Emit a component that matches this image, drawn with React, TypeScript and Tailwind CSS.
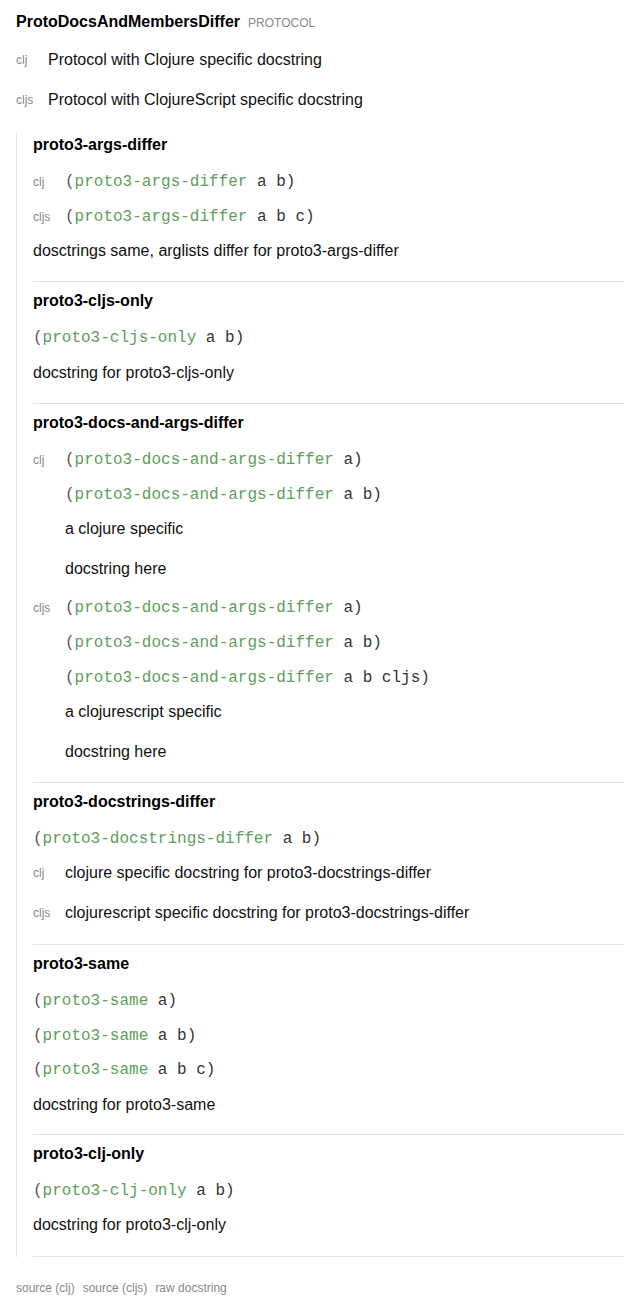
import React from 'react';

const sans = "font-['Liberation_Sans',Arial,sans-serif]";
const mono = "font-['Liberation_Mono','Courier_New',monospace]";

type Code = { name: string; args: string };

const CodeLine = ({ name, args, className = '' }: Code & { className?: string }) => (
  <div className={`${mono} text-[16px] leading-6 whitespace-pre ${className}`}>
    <span className="text-[#555]">(</span>
    <span className="text-[#5d9e5a]">{name}</span>
    <span className="text-[#333]">{args ? ' ' + args : ''})</span>
  </div>
);

// small platform tag (clj / cljs) in a 32px column
const Label = ({ children }: { children: React.ReactNode }) => (
  <span className="w-8 shrink-0 pt-px text-[12px] leading-[23px] text-[#888]">{children}</span>
);

const Doc = ({ children, className = '' }: { children: React.ReactNode; className?: string }) => (
  <p className={`text-[16px] leading-6 text-[#111] ${className}`}>{children}</p>
);

const Member = ({
  title,
  first = false,
  pb = 'pb-[18px]',
  children,
}: {
  title: string;
  first?: boolean;
  pb?: string;
  children: React.ReactNode;
}) => (
  <section className={`border-b border-[#e4e4e4] ${pb}`}>
    <h4 className={`text-[16px] leading-6 font-bold text-black ${first ? 'mt-[2px]' : 'mt-[7px]'}`}>{title}</h4>
    {children}
  </section>
);

export default function App() {
  return (
    <div className={`${sans} bg-white pl-4 pt-[10px] pb-8 min-h-[1311px]`}>
      <div className="flex items-baseline gap-2 leading-6">
        <h2 className="text-[16px] font-bold text-black">ProtoDocsAndMembersDiffer</h2>
        <span className="text-[12px] uppercase text-[#888]">protocol</span>
      </div>
      <div className="mt-[13px] flex items-start">
        <Label>clj</Label>
        <Doc>Protocol with Clojure specific docstring</Doc>
      </div>
      <div className="mt-4 flex items-start">
        <Label>cljs</Label>
        <Doc>Protocol with ClojureScript specific docstring</Doc>
      </div>

      <div className="mt-[21px] border-l border-[#e4e4e4] pl-4">
        <Member title="proto3-args-differ" first>
          <div className="mt-[13px] flex items-start">
            <Label>clj</Label>
            <CodeLine name="proto3-args-differ" args="a b" />
          </div>
          <div className="mt-[11px] flex items-start">
            <Label>cljs</Label>
            <CodeLine name="proto3-args-differ" args="a b c" />
          </div>
          <Doc className="mt-[10px]">dosctrings same, arglists differ for proto3-args-differ</Doc>
        </Member>

        <Member title="proto3-cljs-only">
          <CodeLine className="mt-[13px]" name="proto3-cljs-only" args="a b" />
          <Doc className="mt-[11px]">docstring for proto3-cljs-only</Doc>
        </Member>

        <Member title="proto3-docs-and-args-differ">
          <div className="mt-[13px] flex items-start">
            <Label>clj</Label>
            <div>
              <CodeLine name="proto3-docs-and-args-differ" args="a" />
              <CodeLine className="mt-[11px]" name="proto3-docs-and-args-differ" args="a b" />
              <Doc className="mt-[10px]">a clojure specific</Doc>
              <Doc className="mt-4">docstring here</Doc>
            </div>
          </div>
          <div className="mt-[15px] flex items-start">
            <Label>cljs</Label>
            <div>
              <CodeLine name="proto3-docs-and-args-differ" args="a" />
              <CodeLine className="mt-[11px]" name="proto3-docs-and-args-differ" args="a b" />
              <CodeLine className="mt-[11px]" name="proto3-docs-and-args-differ" args="a b cljs" />
              <Doc className="mt-[10px]">a clojurescript specific</Doc>
              <Doc className="mt-4">docstring here</Doc>
            </div>
          </div>
        </Member>

        <Member title="proto3-docstrings-differ" pb="pb-[19px]">
          <CodeLine className="mt-[13px]" name="proto3-docstrings-differ" args="a b" />
          <div className="mt-[10px] flex items-start">
            <Label>clj</Label>
            <Doc>clojure specific docstring for proto3-docstrings-differ</Doc>
          </div>
          <div className="mt-4 flex items-start">
            <Label>cljs</Label>
            <Doc>clojurescript specific docstring for proto3-docstrings-differ</Doc>
          </div>
        </Member>

        <Member title="proto3-same" pb="pb-[17px]">
          <CodeLine className="mt-[13px]" name="proto3-same" args="a" />
          <CodeLine className="mt-[11px]" name="proto3-same" args="a b" />
          <CodeLine className="mt-[10px]" name="proto3-same" args="a b c" />
          <Doc className="mt-[11px]">docstring for proto3-same</Doc>
        </Member>

        <Member title="proto3-clj-only" pb="pb-[19px]">
          <CodeLine className="mt-[13px]" name="proto3-clj-only" args="a b" />
          <Doc className="mt-[10px]">docstring for proto3-clj-only</Doc>
        </Member>
      </div>

      <div className="mt-[23px] flex gap-2 text-[12px] leading-4 text-[#888]">
        <span>source (clj)</span>
        <span>source (cljs)</span>
        <span>raw docstring</span>
      </div>
    </div>
  );
}
